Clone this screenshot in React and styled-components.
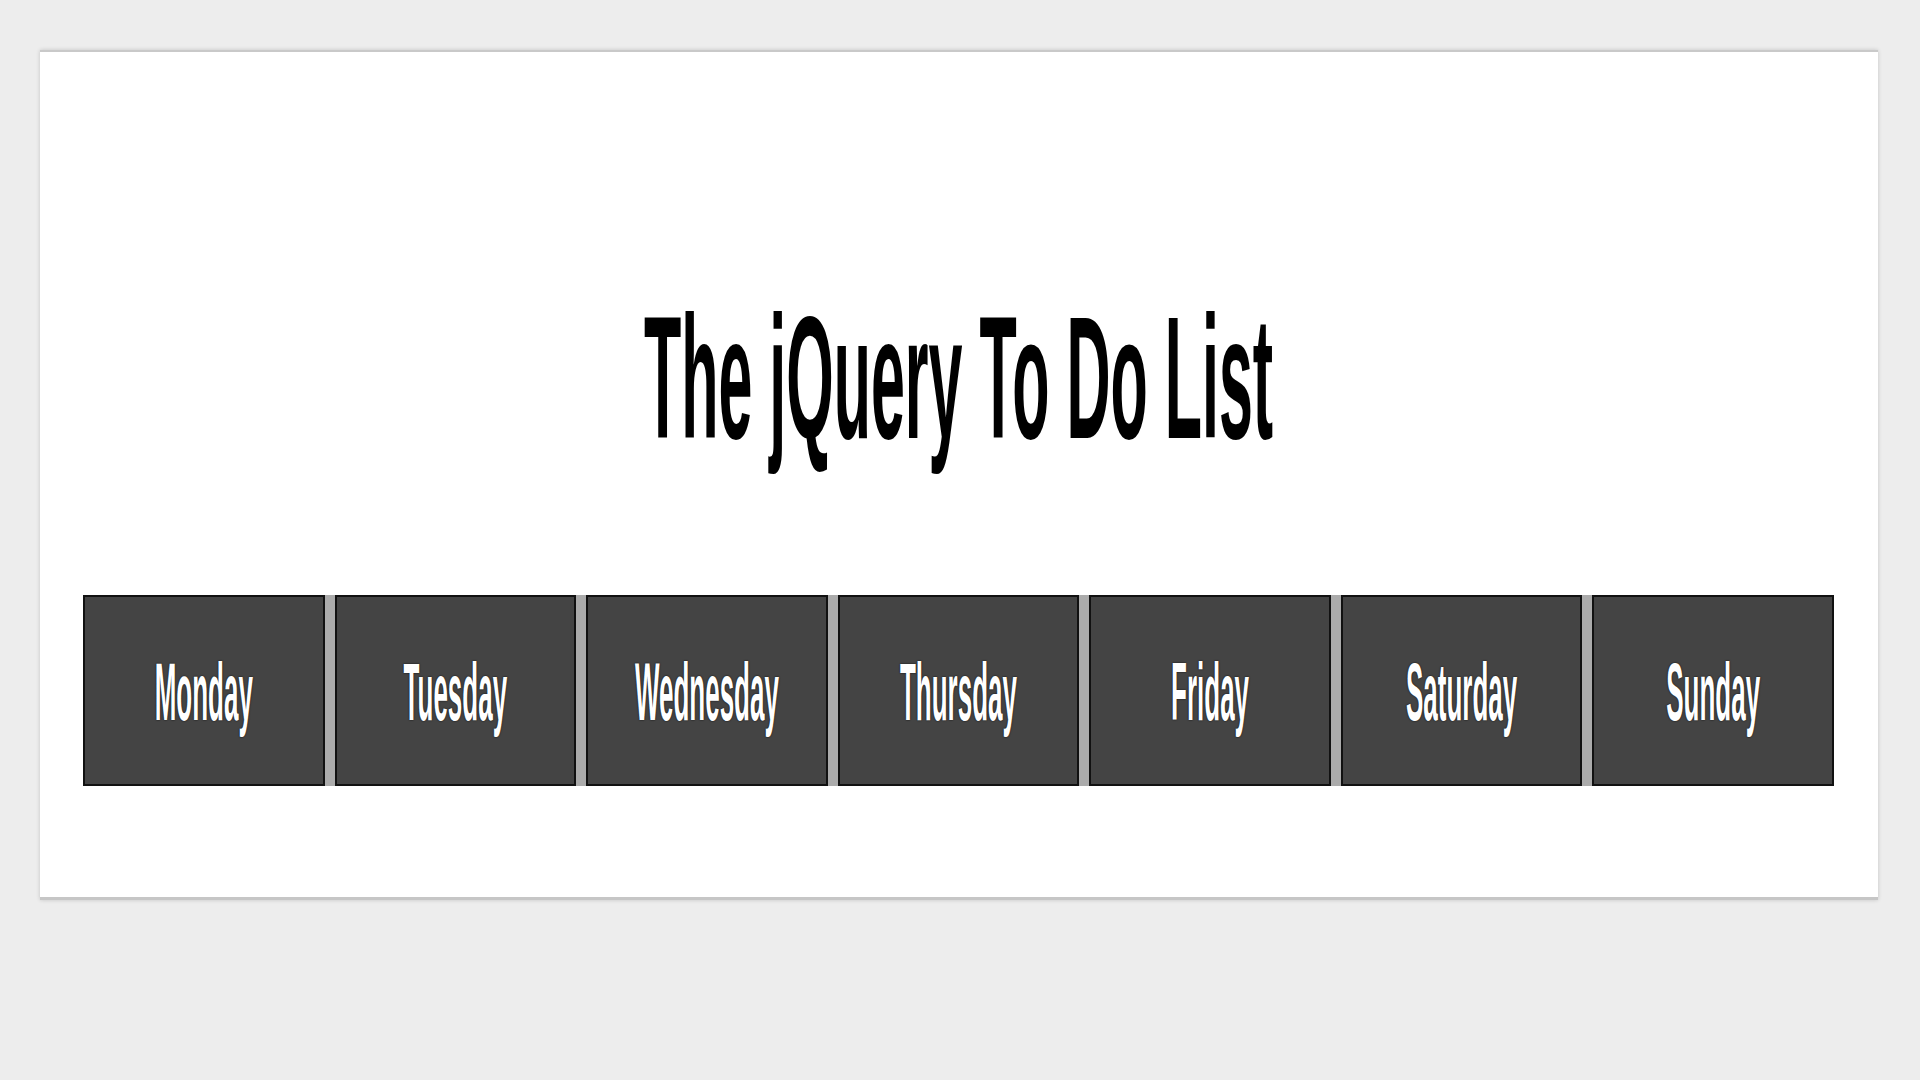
import React from 'react';
import styled, { createGlobalStyle } from 'styled-components';

const GlobalStyle = createGlobalStyle`
    html, body {
        margin: 0;
        padding: 0;
        background: #ededed;
        font-family: "Liberation Sans", Arial, sans-serif;
    }
`;

const Page = styled.div`
    padding: 50px 42px 0 40px;
    min-height: 1080px;
    box-sizing: border-box;
`;

const Card = styled.div`
    background: #fff;
    border-top: 2px solid #c9c9c9;
    border-bottom: 3px solid #c6c6c6;
    box-shadow: 0 0 4px rgba(0, 0, 0, 0.18);
    padding: 296px 44px 111px 43px;
    display: flex;
    flex-flow: column nowrap;
`;

const Heading = styled.h1`
    margin: 0;
    height: 60px;
    line-height: 60px;
    font-size: 61px;
    font-weight: bold;
    color: #000;
    text-align: center;
    & span {
        display: inline-block;
        transform: scaleY(2.86);
    }
`;

const Week = styled.div`
    margin-top: 187px;
    display: grid;
    grid-template-columns: repeat(7, 1fr);
    gap: 10px;
    background: #ababab;
`;

const Day = styled.div`
    height: 191px;
    box-sizing: border-box;
    background: #444;
    border: 2px solid #111;
    display: flex;
    align-items: center;
    justify-content: center;
    & span {
        display: inline-block;
        font-size: 26px;
        line-height: 26px;
        font-weight: bold;
        color: #fff;
        text-shadow: 0 0 1px #000;
        transform: scaleY(3.17);
    }
`;

const days = ['Monday', 'Tuesday', 'Wednesday', 'Thursday', 'Friday', 'Saturday', 'Sunday'];

export default function App() {
    return (
        <>
            <GlobalStyle />
            <Page>
                <Card>
                    <Heading>
                        <span>The jQuery To Do List</span>
                    </Heading>
                    <Week>
                        {days.map(day => (
                            <Day key={day}>
                                <span>{day}</span>
                            </Day>
                        ))}
                    </Week>
                </Card>
            </Page>
        </>
    );
}
